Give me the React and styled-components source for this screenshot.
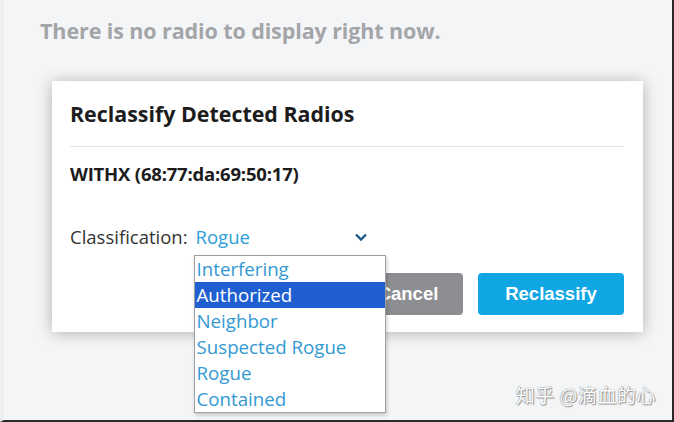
import React from 'react';
import styled, { createGlobalStyle } from 'styled-components';

const GlobalStyle = createGlobalStyle`
  html, body {
    margin: 0;
    padding: 0;
    background: #f4f5f7;
  }
  body {
    font-family: "Open Sans", "Noto Sans", sans-serif;
  }
`;

const Page = styled.div`
  position: relative;
  box-sizing: border-box;
  width: 674px;
  height: 422px;
  background: #f4f5f7;
  border-right: 2px solid #2a2a2a;
  border-bottom: 2px solid #2a2a2a;
  border-left: 4px solid #eceef0;
  padding: 16px 0 0 36px;
  overflow: hidden;
`;

const EmptyText = styled.div`
  font-size: 21.5px;
  font-weight: 700;
  color: #a3a5a8;
  line-height: 30px;
  letter-spacing: -0.1px;
`;

const Modal = styled.div`
  position: relative;
  box-sizing: border-box;
  width: 591px;
  height: 251px;
  margin: 35px 0 0 12px;
  background: #fff;
  box-shadow: 0 1px 14px rgba(0, 0, 0, 0.28);
  padding: 0 19px 0 18px;
  display: flex;
  flex-direction: column;
`;

const Title = styled.h2`
  margin: 0;
  padding: 16px 0 15px;
  font-size: 21.4px;
  font-weight: 700;
  color: #1c1c1c;
  line-height: 34px;
  border-bottom: 1px solid #e4e4e4;
`;

const RadioName = styled.div`
  margin-top: 15px;
  font-size: 18.5px;
  font-weight: 700;
  color: #1c1c1c;
  line-height: 24px;
  letter-spacing: -0.2px;
`;

const Field = styled.div`
  display: flex;
  align-items: center;
  margin-top: 39px;
  font-size: 18.5px;
  line-height: 24px;
  color: #333;
`;

const Label = styled.span`
  margin-right: 8px;
`;

const Select = styled.div`
  position: relative;
  display: flex;
  align-items: center;
  justify-content: space-between;
  width: 176px;
  color: #2b9fd8;
`;

const Chevron = styled.svg`
  width: 14px;
  height: 10px;
  margin-right: 4px;
`;

const Options = styled.ul`
  position: absolute;
  z-index: 5;
  top: 30px;
  left: -2px;
  box-sizing: border-box;
  width: 192px;
  margin: 0;
  padding: 0;
  list-style: none;
  background: #fff;
  border: 1px solid #a0a0a0;
  box-shadow: 1px 2px 4px rgba(0, 0, 0, 0.2);
`;

const Option = styled.li`
  height: 26px;
  line-height: 26px;
  padding-left: 2px;
  font-size: 18.7px;
  color: ${({ selected }) => (selected ? '#fff' : '#3399d3')};
  background: ${({ selected }) => (selected ? '#1f5fd0' : 'transparent')};
`;

const Actions = styled.div`
  display: flex;
  justify-content: flex-end;
  gap: 15px;
  margin-top: 24px;
`;

const Button = styled.button`
  height: 42px;
  width: ${({ wide }) => (wide ? '146px' : '110px')};
  border: none;
  border-radius: 4px;
  background: ${({ primary }) => (primary ? '#0fa6e3' : '#8d8e91')};
  color: #fff;
  font-family: "Liberation Sans", Arial, sans-serif;
  font-size: 18.5px;
  font-weight: 700;
  padding: 0;
`;

const Watermark = styled.div`
  position: absolute;
  right: 16px;
  bottom: 12px;
  font-family: "Noto Sans CJK SC", sans-serif;
  font-size: 19px;
  color: #fff;
  letter-spacing: 0.5px;
  text-shadow: 0 0 1px #8a8a8a, 0 0 1px #8a8a8a, 1px 1px 1px #9a9a9a;
`;

const options = ['Interfering', 'Authorized', 'Neighbor', 'Suspected Rogue', 'Rogue', 'Contained'];

export default function App() {
  return (
    <>
      <GlobalStyle />
      <Page>
        <EmptyText>There is no radio to display right now.</EmptyText>
        <Modal>
          <Title>Reclassify Detected Radios</Title>
          <RadioName>WITHX (68:77:da:69:50:17)</RadioName>
          <Field>
            <Label>Classification:</Label>
            <Select>
              <span>Rogue</span>
              <Chevron viewBox="0 0 14 10">
                <path d="M2 2.5 L7 7.5 L12 2.5" fill="none" stroke="#1d5a8c" strokeWidth="2.4" />
              </Chevron>
              <Options>
                {options.map(o => (
                  <Option key={o} selected={o === 'Authorized'}>{o}</Option>
                ))}
              </Options>
            </Select>
          </Field>
          <Actions>
            <Button>Cancel</Button>
            <Button primary wide>Reclassify</Button>
          </Actions>
        </Modal>
        <Watermark>知乎 @滴血的心</Watermark>
      </Page>
    </>
  );
}
